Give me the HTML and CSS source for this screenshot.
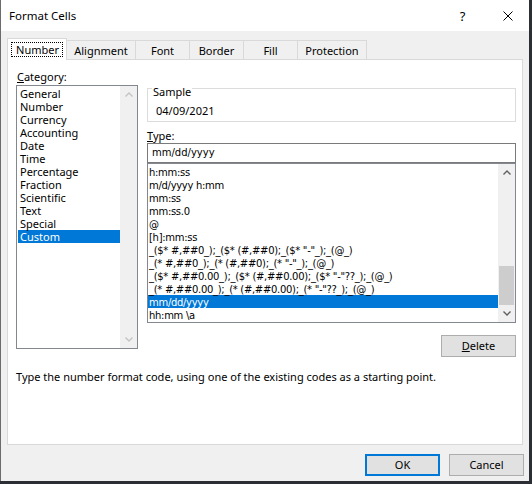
FILE: index.html
```html
<!DOCTYPE html>
<html>
<head>
<meta charset="utf-8">
<link rel="stylesheet" href="styles.css">
</head>
<body>
<div class="dialog">
  <div class="titlebar">
    <span class="title">Format Cells</span>
    <span class="tb-btn help">?</span>
    <span class="tb-btn close"><svg width="10" height="10" viewBox="0 0 10 10"><path d="M0.5 0.5L9.5 9.5M9.5 0.5L0.5 9.5" stroke="#000" stroke-width="1" fill="none"/></svg></span>
  </div>
  <div class="body">
    <div class="tabs">
      <div class="tab active w-number"><span class="focus">Number</span></div>
      <div class="tab w-align">Alignment</div>
      <div class="tab w-small">Font</div>
      <div class="tab w-small">Border</div>
      <div class="tab w-small">Fill</div>
      <div class="tab w-align">Protection</div>
    </div>
    <div class="panel">
      <div class="main">
        <div class="cat-col">
          <div class="label"><u>C</u>ategory:</div>
          <div class="listbox cat-list">
            <div class="cat-items">
              <div class="item">General</div>
              <div class="item">Number</div>
              <div class="item">Currency</div>
              <div class="item">Accounting</div>
              <div class="item">Date</div>
              <div class="item">Time</div>
              <div class="item">Percentage</div>
              <div class="item">Fraction</div>
              <div class="item">Scientific</div>
              <div class="item">Text</div>
              <div class="item">Special</div>
              <div class="item sel">Custom</div>
            </div>
            <div class="vscroll disabled">
              <div class="sb-btn"><svg width="8" height="5" viewBox="0 0 8 5"><path d="M0.5 4.5L4 1L7.5 4.5" fill="none" stroke="#c4c4c4" stroke-width="1.4"/></svg></div>
              <div class="sb-track"></div>
              <div class="sb-btn"><svg width="8" height="5" viewBox="0 0 8 5"><path d="M0.5 0.5L4 4L7.5 0.5" fill="none" stroke="#c4c4c4" stroke-width="1.4"/></svg></div>
            </div>
          </div>
        </div>
        <div class="right-col">
          <div class="sample">
            <div class="sample-head">
              <span class="sh-left"></span>
              <span class="sh-legend">Sample</span>
              <span class="sh-right"></span>
            </div>
            <div class="sample-body">04/09/2021</div>
          </div>
          <div class="label type-label"><u>T</u>ype:</div>
          <div class="type-input">mm/dd/yyyy</div>
          <div class="listbox type-list">
            <div class="type-items">
              <div class="t-item">h:mm:ss</div>
              <div class="t-item">m/d/yyyy h:mm</div>
              <div class="t-item">mm:ss</div>
              <div class="t-item">mm:ss.0</div>
              <div class="t-item">@</div>
              <div class="t-item">[h]:mm:ss</div>
              <div class="t-item">_($* #,##0_);_($* (#,##0);_($* "-"_);_(@_)</div>
              <div class="t-item">_(* #,##0_);_(* (#,##0);_(* "-"_);_(@_)</div>
              <div class="t-item">_($* #,##0.00_);_($* (#,##0.00);_($* "-"??_);_(@_)</div>
              <div class="t-item">_(* #,##0.00_);_(* (#,##0.00);_(* "-"??_);_(@_)</div>
              <div class="t-item sel">mm/dd/yyyy</div>
              <div class="t-item">hh:mm \a</div>
            </div>
            <div class="vscroll">
              <div class="sb-btn"><svg width="8" height="5" viewBox="0 0 8 5"><path d="M0.5 4.5L4 1L7.5 4.5" fill="none" stroke="#606060" stroke-width="1.4"/></svg></div>
              <div class="sb-track"><div class="thumb"></div></div>
              <div class="sb-btn"><svg width="8" height="5" viewBox="0 0 8 5"><path d="M0.5 0.5L4 4L7.5 0.5" fill="none" stroke="#606060" stroke-width="1.4"/></svg></div>
            </div>
          </div>
          <div class="btn-row"><button class="btn"><u>D</u>elete</button></div>
        </div>
      </div>
      <div class="desc">Type the number format code, using one of the existing codes as a starting point.</div>
    </div>
    <div class="footer">
      <button class="btn ok">OK</button>
      <button class="btn">Cancel</button>
    </div>
  </div>
</div>
</body>
</html>
```

FILE: styles.css
```css
* { box-sizing: border-box; }
html, body { margin: 0; padding: 0; }
body {
  width: 532px;
  height: 484px;
  overflow: hidden;
  background: #2b2f33;
  font-family: "Noto Sans", "Open Sans", sans-serif;
  font-size: 11px;
  color: #000;
}
u { text-decoration: underline; text-underline-offset: 1px; }

.dialog {
  width: 529px;
  height: 481px;
  background: #f0f0f0;
  border-left: 1px solid #6c6c6c;
  display: flex;
  flex-direction: column;
}

.titlebar {
  flex: none;
  height: 31px;
  background: #fff;
  display: flex;
  align-items: center;
}
.title { flex: 1; padding-left: 8px; line-height: 31px; font-size: 11.5px; }
.tb-btn {
  width: 45px;
  height: 31px;
  display: flex;
  align-items: center;
  justify-content: center;
}
.help { font-size: 13px; padding-left: 2px; }
.close { padding-left: 3px; }

.body {
  flex: 1;
  padding: 7px 6px 0 6px;
  display: flex;
  flex-direction: column;
}

.tabs {
  display: flex;
  align-items: flex-end;
  height: 22px;
}
.tab {
  height: 20px;
  margin-left: -1px;
  border: 1px solid #d9d9d9;
  border-bottom: none;
  background: #f0f0f0;
  display: flex;
  align-items: center;
  justify-content: center;
  white-space: nowrap;
}
.tab.active {
  height: 22px;
  margin-left: 0;
  background: #fff;
  position: relative;
  z-index: 1;
}
.w-number { width: 60px; }
.w-align { width: 70px; }
.w-small { width: 55px; }
.focus {
  border: 1px dotted #000;
  line-height: 13px;
  padding: 0 3px 0 4px;
}

.panel {
  width: 516px;
  height: 386px;
  margin-top: -1px;
  background: #fff;
  border: 1px solid #d9d9d9;
  padding: 9px 6px 0 8px;
}

.main { display: flex; gap: 9px; }

.label { line-height: 15px; padding-left: 1px; }

.listbox {
  border: 1px solid #828790;
  display: flex;
  background: #fff;
}
.cat-col { width: 122px; }
.cat-list { margin-top: 1px; width: 122px; height: 264px; }
.cat-items { flex: 1; padding: 1px 0 0 1px; }
.item {
  height: 13px;
  line-height: 13px;
  padding-left: 2px;
  white-space: nowrap;
}
.item.sel, .t-item.sel { background: #0078d7; color: #fff; }

.vscroll {
  width: 17px;
  flex: none;
  background: #f0f0f0;
  display: flex;
  flex-direction: column;
}
.sb-btn {
  height: 17px;
  display: flex;
  align-items: center;
  justify-content: center;
}
.sb-btn svg { display: block; }
.sb-track {
  flex: 1;
  display: flex;
  flex-direction: column;
  justify-content: flex-end;
}
.thumb { height: 39px; margin: 0 1px; background: #cdcdcd; }

.right-col {
  width: 369px;
  padding-top: 15px;
  display: flex;
  flex-direction: column;
}
.sample-head { display: flex; height: 15px; line-height: 15px; }
.sh-left {
  width: 5px;
  margin-top: 4px;
  border-top: 1px solid #dcdcdc;
  border-left: 1px solid #dcdcdc;
}
.sh-legend { padding: 0 1px; }
.sh-right {
  flex: 1;
  margin-top: 4px;
  border-top: 1px solid #dcdcdc;
  border-right: 1px solid #dcdcdc;
}
.sample-body {
  border: 1px solid #dcdcdc;
  border-top: none;
  padding: 4px 0 3px 8px;
  line-height: 15px;
}
.type-label { margin-top: 6px; padding-left: 0; }
.type-input {
  height: 20px;
  border: 1px solid #7a7a7a;
  background: #fff;
  padding-left: 4px;
  font-family: "DejaVu Sans", sans-serif;
  font-size: 10px;
  line-height: 18px;
}
.type-list { height: 160px; }
.type-items {
  flex: 1;
  padding-top: 1px;
  overflow: hidden;
  font-family: "DejaVu Sans", sans-serif;
  font-size: 10px;
  letter-spacing: -0.3px;
}
.t-item {
  height: 13px;
  line-height: 11px;
  padding-top: 2px;
  padding-left: 1px;
  white-space: nowrap;
}

.btn-row { display: flex; justify-content: flex-end; margin-top: 12px; }
.btn {
  width: 75px;
  height: 22px;
  margin: 0;
  padding: 0;
  background: #e1e1e1;
  border: 1px solid #adadad;
  font-family: "Noto Sans", "Open Sans", sans-serif;
  font-size: 11px;
  color: #000;
  line-height: 18px;
}
.btn.ok { border: 2px solid #0078d7; }

.desc { margin-top: 12px; line-height: 15px; white-space: nowrap; }

.footer {
  display: flex;
  justify-content: flex-end;
  gap: 9px;
  margin-top: 9px;
  margin-right: -1px;
}
```
